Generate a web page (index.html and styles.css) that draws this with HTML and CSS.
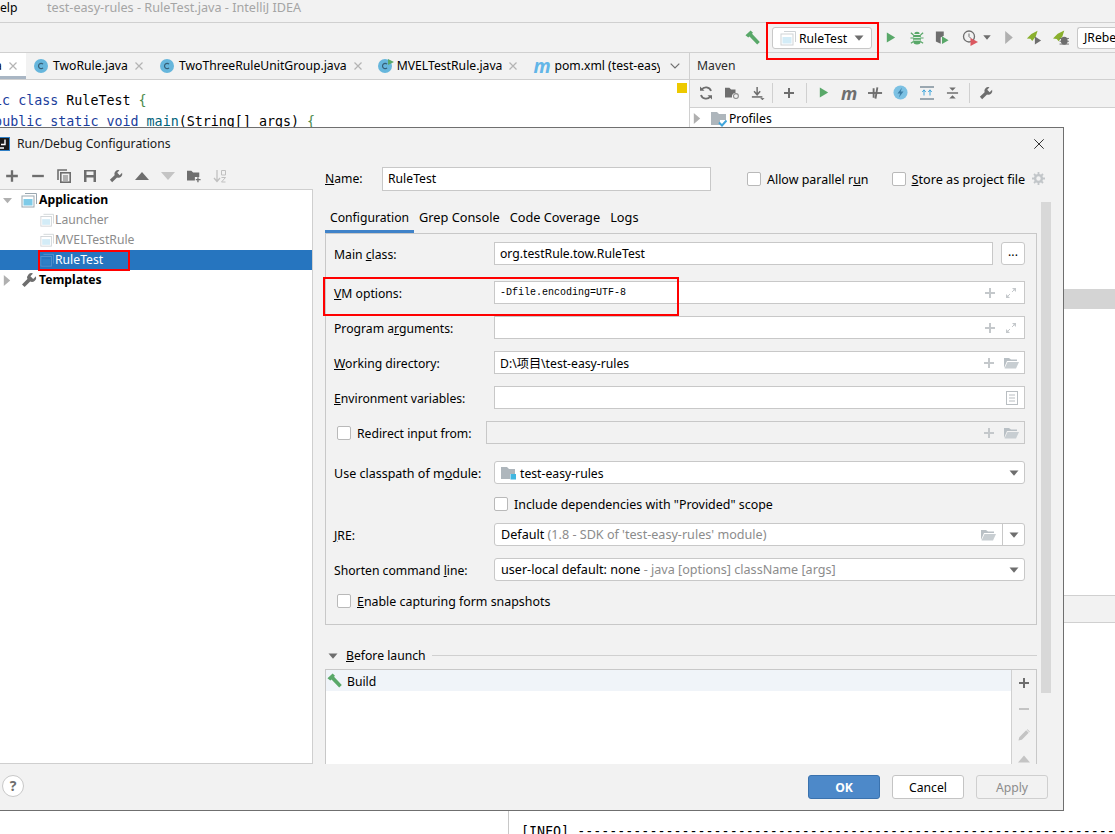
FILE: index.html
```html
<!DOCTYPE html>
<html lang="en">
<head>
<meta charset="utf-8">
<title>Run/Debug Configurations</title>
<link rel="stylesheet" href="styles.css">
</head>
<body>
<svg class="defs" width="0" height="0" aria-hidden="true">
  <defs>
    <symbol id="i-hammer" viewBox="0 0 16 16"><path d="M0.5 5.5 6 0.5 8.5 3 7.5 4 15.8 12.8 13 15.5 4.8 6.8 3.5 8Z" fill="#59a869"/></symbol>
    <symbol id="i-config" viewBox="0 0 16 16"><path d="M4 1.5H15.5V12" fill="none" stroke="#cfd3d6"/><rect x="1" y="4" width="12" height="11" fill="#fff" stroke="#cfd3d6"/><rect x="2.5" y="7" width="9" height="6.5" fill="#d3ecf7"/></symbol>
    <symbol id="i-config-app" viewBox="0 0 16 16"><path d="M4 1.5H15.5V12" fill="none" stroke="#9aa7b0"/><rect x="1" y="4" width="12" height="11" fill="#fff" stroke="#9aa7b0"/><rect x="2.5" y="7" width="9" height="6.5" fill="#7fcbe8"/></symbol>
    <symbol id="i-config-sel" viewBox="0 0 16 16"><path d="M4 1.5H15.5V12" fill="none" stroke="#5a95cf"/><rect x="1" y="4" width="12" height="11" fill="none" stroke="#5a95cf"/><rect x="2.5" y="7" width="9" height="6.5" fill="#2f7fc6"/></symbol>
    <symbol id="i-run" viewBox="0 0 12 14"><path d="M1 1 11 7 1 13Z" fill="#59a869"/></symbol>
    <symbol id="i-bug" viewBox="0 0 16 16"><path d="M5 3.5A3 2.6 0 0 1 11 3.5ZM3.6 4.5H12.4V11A4.4 4.4 0 0 1 3.6 11Z" fill="#59a869"/><path d="M1 2 4 4.5M15 2 12 4.5M0.5 8H3.6M12.4 8H15.5M1 14 4 12M15 14 12 12" stroke="#59a869" stroke-width="1.4"/><path d="M4 7.5H12M4 10.5H12" stroke="#fff"/></symbol>
    <symbol id="i-cover" viewBox="0 0 16 16"><path d="M1 1H10V6L6.5 8V15L1 12.5Z" fill="#6e6e6e"/><path d="M8 6.5 15.5 11 8 15.5Z" fill="#59a869"/></symbol>
    <symbol id="i-profile" viewBox="0 0 16 16"><circle cx="6.5" cy="6.5" r="5.5" fill="none" stroke="#6e6e6e" stroke-width="1.3"/><path d="M6.5 3.5V6.5L8.5 8.5" fill="none" stroke="#6e6e6e"/><path d="M8 8 15.5 12 8 16Z" fill="#db5860"/></symbol>
    <symbol id="i-rebel" viewBox="0 0 18 16"><path d="M1 9 6 4 13 0.5 11 7 7 12 5 9.5Z" fill="#8ab02e"/><path d="M10 7 17 11.5 10 16Z" fill="#6e6e6e"/></symbol>
    <symbol id="i-rebelbug" viewBox="0 0 18 16"><path d="M1 9 6 4 13 0.5 11 7 7 12 5 9.5Z" fill="#8ab02e"/><ellipse cx="13" cy="11.5" rx="3.6" ry="4.2" fill="#6e6e6e"/><path d="M8 9H18M8 12H18M8 15H18" stroke="#6e6e6e"/></symbol>
    <symbol id="i-class" viewBox="0 0 14 14"><circle cx="7" cy="7" r="7" fill="#66b6dc"/><path d="M9 5.2A2.6 2.6 0 1 0 9 8.8" fill="none" stroke="#365f77" stroke-width="1.2"/></symbol>
    <symbol id="i-close" viewBox="0 0 10 10"><path d="M1.5 1.5 8.5 8.5M8.5 1.5 1.5 8.5" stroke="#b4b4b4" stroke-width="1.2"/></symbol>
    <symbol id="i-xlarge" viewBox="0 0 10 10"><path d="M0.3 0.3 9.7 9.7M9.7 0.3 0.3 9.7" stroke="#333" stroke-width="1"/></symbol>
    <symbol id="i-plus" viewBox="0 0 12 12"><path d="M6 1V11M1 6H11" stroke="currentColor" stroke-width="2"/></symbol>
    <symbol id="i-minus" viewBox="0 0 12 12"><path d="M1 6H11" stroke="currentColor" stroke-width="2"/></symbol>
    <symbol id="i-copy" viewBox="0 0 14 14"><path d="M1 11V1H10" fill="none" stroke="#6e6e6e" stroke-width="1.6"/><rect x="3.8" y="3.8" width="9.4" height="9.4" fill="none" stroke="#6e6e6e" stroke-width="1.6"/><path d="M6 7H11M6 9H11M6 11H11" stroke="#6e6e6e"/></symbol>
    <symbol id="i-save" viewBox="0 0 14 14"><path d="M1 1H13V13H1Z" fill="#6e6e6e"/><rect x="3.5" y="2.5" width="7" height="3.5" fill="#f2f2f2"/><rect x="3.5" y="8.5" width="7" height="4.5" fill="#f2f2f2"/></symbol>
    <symbol id="i-wrench" viewBox="0 0 16 16"><path d="M15 4.2 12.2 7 9.4 4.2 12 1.4A4.4 4.4 0 0 0 6.4 7L1 12.4 3.6 15 9.2 9.6A4.4 4.4 0 0 0 15 4.2Z" fill="#6e6e6e"/></symbol>
    <symbol id="i-up" viewBox="0 0 12 8"><path d="M6 0.5 12 7.5H0Z" fill="currentColor"/></symbol>
    <symbol id="i-down" viewBox="0 0 12 8"><path d="M0 0.5H12L6 7.5Z" fill="currentColor"/></symbol>
    <symbol id="i-right" viewBox="0 0 8 12"><path d="M0.5 0 7.5 6 0.5 12Z" fill="#b0b0b0"/></symbol>
    <symbol id="i-folderplus" viewBox="0 0 16 14"><path d="M0 1H5L7 3H14V8H9V12H0Z" fill="#6e6e6e"/><path d="M12.5 8.5V14M10 11.2H15.5" stroke="#6e6e6e" stroke-width="1.5"/></symbol>
    <symbol id="i-sort" viewBox="0 0 14 14"><path d="M4 1V12M1 9 4 12.5 7 9" fill="none" stroke="#c0c0c0" stroke-width="1.3"/><path d="M8.5 1.5H12.5V6H8.5ZM8.5 8.5H12.5L8.5 13H12.5" fill="none" stroke="#c0c0c0"/></symbol>
    <symbol id="i-expand" viewBox="0 0 12 12"><path d="M7 1H11V5ZM1 7V11H5Z" fill="#c4c8cb"/><path d="M9.5 2.5 7 5M2.5 9.5 5 7" stroke="#c4c8cb"/></symbol>
    <symbol id="i-open" viewBox="0 0 15 12"><path d="M0 1H5L7 2.5H13V4H3L0 11Z" fill="#b9c0c5"/><path d="M3.5 5H15L12 11.5H0.5Z" fill="#c8ced2"/></symbol>
    <symbol id="i-doc" viewBox="0 0 12 14"><rect x="0.5" y="0.5" width="11" height="13" fill="#fff" stroke="#b9bec2"/><path d="M3 4H9M3 7H9M3 10H9" stroke="#b9bec2"/></symbol>
    <symbol id="i-module" viewBox="0 0 15 14"><path d="M0 1H6L8 3H14V8H9V13H0Z" fill="#aeb6bc"/><rect x="9.5" y="8" width="5.5" height="5.5" fill="#40b6e0"/></symbol>
    <symbol id="i-gear" viewBox="0 0 14 14"><circle cx="6.5" cy="6.5" r="3.4" fill="none" stroke="#c2c6c9" stroke-width="2.4"/><path d="M6.5 0V3M6.5 10V13M0 6.5H3M10 6.5H13M2 2 4 4M9 9 11 11M11 2 9 4M4 9 2 11" stroke="#c2c6c9" stroke-width="1.8"/></symbol>
    <symbol id="i-sync" viewBox="0 0 14 14"><path d="M12 5A5.2 5.2 0 0 0 2.6 3.8M2 9A5.2 5.2 0 0 0 11.4 10.2" fill="none" stroke="#6e6e6e" stroke-width="1.8"/><path d="M1 0.5 5.5 4.8H1ZM13 13.5 8.5 9.2H13Z" fill="#6e6e6e"/></symbol>
    <symbol id="i-foldersync" viewBox="0 0 16 14"><path d="M0 1H5L7 3H12V7A4 4 0 0 0 8 12H0Z" fill="#6e6e6e"/><circle cx="12.5" cy="10.5" r="2.8" fill="none" stroke="#8b8b8b" stroke-width="1.2"/></symbol>
    <symbol id="i-dl" viewBox="0 0 16 16"><path d="M7 1V9M3.5 6 7 10 10.5 6" fill="none" stroke="#6e6e6e" stroke-width="1.7"/><path d="M1 12.5H13" stroke="#6e6e6e" stroke-width="1.8"/><path d="M10.5 14H15.5L13 16Z" fill="#555"/></symbol>
    <symbol id="i-skip" viewBox="0 0 16 14"><path d="M0 7H15" stroke="#6e6e6e" stroke-width="2"/><path d="M6 2V12M10 1 8 13" stroke="#6e6e6e" stroke-width="2"/></symbol>
    <symbol id="i-bolt" viewBox="0 0 16 16"><circle cx="8" cy="8" r="7.5" fill="#7cc1e3"/><path d="M9.5 2.8 4.8 9H7.6L6.3 13.2 11.2 7H8.3Z" fill="#3c7ea6"/></symbol>
    <symbol id="i-collapse" viewBox="0 0 14 14"><path d="M0 1H14M0 13H14" stroke="#9aa7b0" stroke-width="2"/><path d="M4 9.5V4M2.3 6 4 3.8 5.7 6M10 9.5V4M8.3 6 10 3.8 11.7 6" fill="none" stroke="#40a6dc"/></symbol>
    <symbol id="i-expandall" viewBox="0 0 14 14"><path d="M1 7H13" stroke="#6e6e6e" stroke-width="1.6"/><path d="M3.5 1H10.5L7 4.5ZM3.5 13H10.5L7 9.5Z" fill="#6e6e6e"/></symbol>
    <symbol id="i-profiles" viewBox="0 0 16 16"><path d="M0 1H6L8 3H15V9H9V14H0Z" fill="#aeb6bc"/><path d="M8 11.5 11 14.5 15.5 9.5" fill="none" stroke="#40a6dc" stroke-width="2"/></symbol>
    <symbol id="i-pencil" viewBox="0 0 14 14"><path d="M0.5 13.5 1.5 9.5 9.5 1.5 12.5 4.5 4.5 12.5ZM10.3 0.8 11 0.2 13.8 3 13.2 3.7Z" fill="#c4c4c4"/></symbol>
    <symbol id="i-idea" viewBox="0 0 14 14"><rect width="14" height="14" fill="#1a1a1a"/><rect x="0.5" y="0.5" width="13" height="13" fill="none" stroke="#2f7fc6"/><path d="M9 2.5V7.5H5M3 11H8" stroke="#fff" stroke-width="1.4" fill="none"/></symbol>
  </defs>
</svg>

<div class="ide">
  <header class="titlebar">
    <span class="menu">elp</span>
    <span class="wintitle">test-easy-rules - RuleTest.java - IntelliJ IDEA</span>
  </header>

  <div class="toolbar">
    <svg class="ic-hammer"><use href="#i-hammer"/></svg>
    <div class="runcombo">
      <svg class="ic16"><use href="#i-config"/></svg>
      <span class="runcombo-name">RuleTest</span>
      <svg class="ic-caret gray-dark"><use href="#i-down"/></svg>
    </div>
    <svg class="ic-run"><use href="#i-run"/></svg>
    <svg class="ic-bug"><use href="#i-bug"/></svg>
    <svg class="ic-cover"><use href="#i-cover"/></svg>
    <svg class="ic-profile"><use href="#i-profile"/></svg>
    <svg class="ic-caret-sm gray-dark"><use href="#i-down"/></svg>
    <svg class="ic-run2"><use href="#i-right"/></svg>
    <svg class="ic-rebel"><use href="#i-rebel"/></svg>
    <svg class="ic-rebel2"><use href="#i-rebelbug"/></svg>
    <div class="jrebel">JRebel</div>
  </div>

  <div class="workspace">
    <section class="editor">
      <nav class="tabs">
        <div class="tab tab-active"><span>a</span><svg class="ic-x"><use href="#i-close"/></svg></div>
        <div class="tab tab-two"><svg class="ic14"><use href="#i-class"/></svg><span>TwoRule.java</span><svg class="ic-x"><use href="#i-close"/></svg></div>
        <div class="tab tab-three"><svg class="ic14"><use href="#i-class"/></svg><span>TwoThreeRuleUnitGroup.java</span><svg class="ic-x"><use href="#i-close"/></svg></div>
        <div class="tab tab-mvel"><span class="classrun"><svg class="ic14"><use href="#i-class"/></svg><i class="classrun-flag"></i></span><span>MVELTestRule.java</span><svg class="ic-x"><use href="#i-close"/></svg></div>
        <div class="tab tab-pom"><span class="maven-m">m</span><span class="pom-name">pom.xml (test-easy-rules)</span></div>
        <svg class="chevron" viewBox="0 0 10 6"><path d="M0.7 0.7 5 5 9.3 0.7" fill="none" stroke="#6e6e6e" stroke-width="1.2"/></svg>
      </nav>
      <div class="codearea">
        <pre class="code"><span class="kw">public class</span> RuleTest <span class="brace">{</span>
    <span class="kw">public static void</span> <span class="fn">main</span>(String[] args) <span class="brace">{</span></pre>
        <div class="marker"></div>
      </div>
    </section>

    <aside class="maven">
      <div class="maven-head">Maven</div>
      <div class="maven-tools">
        <svg class="m-ic"><use href="#i-sync"/></svg>
        <svg class="m-ic m-g1"><use href="#i-foldersync"/></svg>
        <svg class="m-ic m-g1"><use href="#i-dl"/></svg>
        <i class="m-sep"></i>
        <svg class="m-ic m-plus"><use href="#i-plus"/></svg>
        <i class="m-sep"></i>
        <svg class="m-ic m-run"><use href="#i-run"/></svg>
        <span class="m-m">m</span>
        <svg class="m-skip"><use href="#i-skip"/></svg>
        <svg class="m-bolt"><use href="#i-bolt"/></svg>
        <svg class="m-ic m-coll"><use href="#i-collapse"/></svg>
        <svg class="m-exp"><use href="#i-expandall"/></svg>
        <i class="m-sep m-sep-end"></i>
        <svg class="m-ic m-wr"><use href="#i-wrench"/></svg>
      </div>
      <div class="maven-tree">
        <div class="profiles"><svg class="ic-tri"><use href="#i-right"/></svg><svg class="ic16"><use href="#i-profiles"/></svg><span>Profiles</span></div>
        <div class="maven-hl"></div>
      </div>
    </aside>
  </div>

  <div class="toolband"></div>

  <div class="console">
    <div class="console-left"></div>
    <pre class="console-log">[INFO] ------------------------------------------------------------------------</pre>
  </div>
</div>

<div class="dialog">
  <div class="dlg-head">
    <svg class="ic14 dlg-logo"><use href="#i-idea"/></svg>
    <span class="dlg-title">Run/Debug Configurations</span>
    <svg class="dlg-close"><use href="#i-xlarge"/></svg>
  </div>

  <div class="dlg-body">
    <div class="left">
      <div class="left-tools">
        <svg class="t-ic dark"><use href="#i-plus"/></svg>
        <svg class="t-ic dark"><use href="#i-minus"/></svg>
        <svg class="t-ic"><use href="#i-copy"/></svg>
        <svg class="t-ic"><use href="#i-save"/></svg>
        <svg class="t-ic"><use href="#i-wrench"/></svg>
        <svg class="t-ic dark"><use href="#i-up"/></svg>
        <svg class="t-ic pale"><use href="#i-down"/></svg>
        <svg class="t-ic"><use href="#i-folderplus"/></svg>
        <svg class="t-ic"><use href="#i-sort"/></svg>
      </div>
      <div class="tree">
        <div class="node node-root"><svg class="tw-down"><use href="#i-down"/></svg><svg class="ic16"><use href="#i-config-app"/></svg><b>Application</b></div>
        <div class="node node-leaf node-muted"><svg class="ic14"><use href="#i-config"/></svg><span>Launcher</span></div>
        <div class="node node-leaf node-muted"><svg class="ic14"><use href="#i-config"/></svg><span>MVELTestRule</span></div>
        <div class="node node-leaf node-sel"><svg class="ic14"><use href="#i-config-sel"/></svg><span>RuleTest</span></div>
        <div class="node node-root"><svg class="tw-right"><use href="#i-right"/></svg><svg class="ic16"><use href="#i-wrench"/></svg><b>Templates</b></div>
      </div>
    </div>

    <div class="right">
      <div class="config">
        <div class="name-row">
          <label class="name-label"><u>N</u>ame:</label>
          <div class="field name-field">RuleTest</div>
          <span class="check check-allow"></span><span class="check-text">Allow parallel r<u>u</u>n</span>
          <span class="check check-store"></span><span class="check-text check-text-store"><u>S</u>tore as project file</span>
          <svg class="ic-gear"><use href="#i-gear"/></svg>
        </div>

        <div class="cfg-tabs">
          <span class="cfg-tab cfg-tab-on">Configuration</span>
          <span class="cfg-tab">Grep Console</span>
          <span class="cfg-tab">Code Coverage</span>
          <span class="cfg-tab cfg-tab-logs">Logs</span>
        </div>

        <div class="panel">
          <div class="row row-first">
            <label class="lbl">Main <u>c</u>lass:</label>
            <div class="field grow">org.testRule.tow.RuleTest</div>
            <div class="dots">...</div>
          </div>
          <div class="row row-vm">
            <label class="lbl"><u>V</u>M options:</label>
            <div class="field grow"><span class="vm-text">-Dfile.encoding=UTF-8</span><span class="fld-icons"><svg class="fi"><use href="#i-plus"/></svg><svg class="fi"><use href="#i-expand"/></svg></span></div>
          </div>
          <div class="row">
            <label class="lbl">Program a<u>r</u>guments:</label>
            <div class="field grow"><span class="fld-icons"><svg class="fi"><use href="#i-plus"/></svg><svg class="fi"><use href="#i-expand"/></svg></span></div>
          </div>
          <div class="row">
            <label class="lbl"><u>W</u>orking directory:</label>
            <div class="field grow field-low"><span>D:\项目\test-easy-rules</span><span class="fld-icons"><svg class="fi"><use href="#i-plus"/></svg><svg class="fi-open"><use href="#i-open"/></svg></span></div>
          </div>
          <div class="row">
            <label class="lbl"><u>E</u>nvironment variables:</label>
            <div class="field grow"><span class="fld-icons"><svg class="fi-doc"><use href="#i-doc"/></svg></span></div>
          </div>
          <div class="row row-redirect">
            <span class="check"></span><label class="lbl-redirect">Redirect input from:</label>
            <div class="field grow field-off"><span class="fld-icons"><svg class="fi"><use href="#i-plus"/></svg><svg class="fi-open"><use href="#i-open"/></svg></span></div>
          </div>
          <div class="row row-class">
            <label class="lbl lbl-wide">Use classpath of m<u>o</u>dule:</label>
            <div class="field grow combo field-low"><svg class="ic-mod"><use href="#i-module"/></svg><span>test-easy-rules</span><svg class="combo-caret gray-dark"><use href="#i-down"/></svg></div>
          </div>
          <div class="row row-include">
            <span class="check"></span><span class="check-text">Include dependencies with "Provided" scope</span>
          </div>
          <div class="row">
            <label class="lbl"><u>J</u>RE:</label>
            <div class="field grow combo combo-wide"><span>Default <span class="dim">(1.8 - SDK of 'test-easy-rules' module)</span></span><span class="fld-icons jre-icons"><svg class="fi-open"><use href="#i-open"/></svg></span><span class="jre-split"><svg class="combo-caret-s gray-dark"><use href="#i-down"/></svg></span></div>
          </div>
          <div class="row">
            <label class="lbl">Shorten command <u>l</u>ine:</label>
            <div class="field grow combo combo-wide"><span>user-local default: none <span class="dim">- java [options] className [args]</span></span><svg class="combo-caret gray-dark"><use href="#i-down"/></svg></div>
          </div>
          <div class="row row-snap">
            <span class="check"></span><label class="lbl-redirect lbl-snap"><u>E</u>nable capturing form snapshots</label>
          </div>
        </div>

        <div class="before-head">
          <svg class="before-tri gray-dark"><use href="#i-down"/></svg>
          <span class="before-text"><u>B</u>efore launch</span>
          <i class="before-line"></i>
        </div>
        <div class="before-box">
          <div class="before-list">
            <div class="before-item"><svg class="ic-build"><use href="#i-hammer"/></svg><span>Build</span></div>
          </div>
          <div class="before-tools">
            <svg class="bt dark"><use href="#i-plus"/></svg>
            <svg class="bt pale3"><use href="#i-minus"/></svg>
            <svg class="bt"><use href="#i-pencil"/></svg>
            <svg class="bt-up pale3"><use href="#i-up"/></svg>
          </div>
        </div>
      </div>
      <div class="scrollbar"></div>
    </div>
  </div>

  <div class="dlg-foot">
    <div class="help">?</div>
    <div class="btn btn-ok">OK</div>
    <div class="btn btn-cancel">Cancel</div>
    <div class="btn btn-apply">Apply</div>
  </div>
</div>

<div class="mark mark-run"></div>
<div class="mark mark-rule"></div>
<div class="mark mark-vm"></div>
</body>
</html>
```

FILE: styles.css
```css
* { box-sizing: border-box; }
html, body { margin: 0; padding: 0; }
body {
  position: relative;
  width: 1115px;
  height: 834px;
  overflow: hidden;
  background: #fff;
  color: #000;
  font: 12.2px/17px "Noto Sans", "Noto Sans CJK SC", sans-serif;
  white-space: nowrap;
}
svg { display: block; flex: none; }
.defs { position: absolute; }
.ic14 { width: 14px; height: 14px; }
.ic16 { width: 16px; height: 16px; }
.gray-dark { color: #6e6e6e; }

.ide { display: flex; flex-direction: column; height: 834px; }

/* title bar */
.titlebar {
  flex: none;
  display: flex;
  align-items: center;
  height: 23px;
  padding-bottom: 8px;
  background: #f2f2f2;
  border-bottom: 1px solid #d0d0d0;
}
.menu { width: 47px; }
.wintitle { color: #a5a5a5; font-size: 12.65px; }

/* main toolbar */
.toolbar {
  flex: none;
  display: flex;
  align-items: center;
  height: 30px;
  padding: 0 0 0 745px;
  background: #f2f2f2;
  border-bottom: 1px solid #d0d0d0;
}
.ic-hammer { width: 15px; height: 15px; margin-right: 12px; }
.runcombo {
  flex: none;
  display: flex;
  align-items: center;
  width: 100px;
  height: 22px;
  margin-top: 1px;
  padding-left: 7px;
  background: #fff;
  border: 1px solid #c8c8c8;
  border-radius: 3px;
}
.runcombo-name { margin-left: 3px; }
.ic-caret { width: 10px; height: 6px; margin-left: 7px; }
.ic-run { width: 10px; height: 13px; margin-left: 14px; }
.ic-bug { width: 14px; height: 14px; margin-left: 14px; }
.ic-cover { width: 14px; height: 15px; margin-left: 11px; }
.ic-profile { width: 17px; height: 16px; margin-left: 13px; }
.ic-caret-sm { width: 8px; height: 5px; margin-left: 4px; }
.ic-run2 { width: 10px; height: 13px; margin-left: 13px; }
.ic-rebel { width: 16px; height: 15px; margin-left: 12px; }
.ic-rebel2 { width: 17px; height: 15px; margin-left: 10px; }
.jrebel {
  flex: none;
  width: 60px;
  height: 22px;
  margin-left: 8px;
  padding: 1px 0 0 6px;
  background: #fff;
  border: 1px solid #c8c8c8;
  border-right: 0;
  border-radius: 3px 0 0 3px;
}

/* workspace */
.workspace { flex: none; display: flex; height: 542px; }
.editor { flex: none; width: 689px; display: flex; flex-direction: column; }
.tabs {
  flex: none;
  display: flex;
  align-items: center;
  height: 27px;
  background: #f2f2f2;
  border-bottom: 1px solid #d0d0d0;
}
.tab { flex: none; display: flex; align-items: center; height: 100%; }
.tab-active {
  width: 26px;
  background: #fff;
  border-bottom: 3px solid #a9b6c4;
  padding-top: 2px;
}
.tab-two { margin-left: 8px; }
.tab-three { margin-left: 16px; }
.tab-mvel { margin-left: 15px; }
.tab-pom { margin-left: 15px; }
.tab span { margin: -1px 0 0 5px; }
.tab-active span { margin-left: -5px; }
.tab .classrun { margin: 0; position: relative; display: block; }
.classrun-flag {
  position: absolute;
  top: 0;
  right: -2px;
  width: 0;
  height: 0;
  border-left: 6px solid #59a869;
  border-top: 3px solid transparent;
  border-bottom: 3px solid transparent;
}
.ic-x { width: 10px; height: 10px; margin-left: 6px; }
.maven-m {
  width: 16px;
  color: #62b6e8;
  font: italic bold 19px/20px "Noto Sans", sans-serif;
}
.tab .maven-m { margin-left: 0; }
.tab .pom-name { width: 106px; margin-left: 5px; overflow: hidden; }
.chevron { width: 10px; height: 6px; margin-left: 10px; }
.codearea { flex: 1; position: relative; overflow: hidden; background: #fff; }
.code {
  margin: 10px 0 0 -38px;
  font: 13.33px/21px "DejaVu Sans Mono", monospace;
  color: #000;
}
.kw { color: #1a3d9c; }
.fn { color: #00627a; }
.brace { color: #4a8a4a; }
.marker {
  position: absolute;
  top: 3px;
  right: 2px;
  width: 10px;
  height: 10px;
  background: #edc900;
}

/* maven panel */
.maven {
  flex: 1;
  display: flex;
  flex-direction: column;
  border-left: 1px solid #d0d0d0;
}
.maven-head {
  flex: none;
  height: 27px;
  padding: 4px 0 0 7px;
  background: #f2f2f2;
  border-bottom: 1px solid #d0d0d0;
  color: #2b2b2b;
}
.maven-tools {
  flex: none;
  display: flex;
  align-items: center;
  height: 28px;
  padding: 0 0 2px 9px;
  background: #f2f2f2;
  border-bottom: 1px solid #d0d0d0;
}
.m-ic { width: 14px; height: 14px; }
.m-g1 { margin-left: 12px; }
.m-sep { flex: none; width: 1px; height: 20px; margin: 0 10px 0 7px; background: #d0d0d0; }
.m-plus { width: 12px; height: 12px; color: #6e6e6e; margin-right: 4px; }
.m-run { width: 10px; height: 13px; margin-left: 2px; }
.m-m {
  width: 16px;
  margin-left: 12px;
  color: #6e6e6e;
  font: italic bold 18px/18px "Noto Sans", sans-serif;
}
.m-skip { width: 15px; height: 14px; margin-left: 11px; }
.m-bolt { width: 15px; height: 15px; margin-left: 10px; }
.m-coll { margin-left: 12px; }
.m-exp { width: 13px; height: 14px; margin-left: 12px; }
.m-sep-end { margin-left: 10px; margin-right: 9px; }
.maven-tree { flex: 1; background: #fff; }
.profiles { display: flex; align-items: center; height: 20px; padding: 1px 0 0 3px; }
.ic-tri { width: 8px; height: 11px; margin-right: 10px; }
.profiles span { margin-left: 2px; }
.maven-hl { height: 20px; margin-top: 161px; background: #d4d4d4; }

.toolband {
  flex: none;
  height: 28px;
  background: #f2f2f2;
  border-top: 1px solid #d0d0d0;
  border-bottom: 1px solid #d0d0d0;
}
.console { flex: 1; display: flex; overflow: hidden; }
.console-left { flex: none; width: 509px; border-right: 1px solid #c8c8c8; }
.console-log {
  margin: 200px 0 0 12px;
  font: 13.33px/18px "DejaVu Sans Mono", monospace;
}

/* dialog window */
.dialog {
  position: absolute;
  left: -10px;
  top: 127px;
  width: 1074px;
  height: 684px;
  display: flex;
  flex-direction: column;
  background: #f2f2f2;
  border: 1px solid #6f6f6f;
}
.dlg-head { flex: none; display: flex; align-items: center; height: 34px; padding: 0 19px 3px 5px; }
.dlg-logo { margin-right: 7px; }
.dlg-title { flex: 1; color: #1a1a1a; }
.dlg-close { width: 10px; height: 10px; }

.dlg-body { flex: none; display: flex; height: 602px; overflow: hidden; }
.left { flex: none; width: 322px; display: flex; flex-direction: column; }
.left-tools { flex: none; display: flex; align-items: center; gap: 12px; height: 27px; padding-left: 14px; }
.t-ic { width: 14px; height: 14px; }
.dark { color: #6e6e6e; }
.pale { color: #c4c4c4; }
.tree {
  flex: 1;
  background: #fff;
  border-top: 1px solid #cfcfcf;
  border-right: 1px solid #cfcfcf;
  border-bottom: 1px solid #cfcfcf;
}
.node { display: flex; align-items: center; height: 20px; }
.node b, .node span { margin-top: -1px; }
.node-root { padding-left: 12px; }
.node-root b { margin-left: 2px; }
.tw-down { width: 9px; height: 7px; margin-right: 9px; color: #b0b0b0; }
.tw-right { width: 8px; height: 11px; margin-right: 10px; }
.node-leaf { padding-left: 49px; }
.node-leaf span { margin-left: 1px; }
.node-muted { color: #8c8c8c; }
.node-sel { background: #2675bf; color: #fff; }

.right { flex: 1; display: flex; padding-left: 12px; min-width: 0; }
.config { flex: none; width: 712px; }
.scrollbar { flex: none; width: 10px; height: 491px; margin: 40px 0 0 4px; background: #d8d8d8; }

.name-row { display: flex; align-items: center; height: 24px; margin-top: 5px; }
.name-label { flex: none; width: 57px; margin-top: -1px; }
.field {
  display: flex;
  align-items: center;
  height: 23px;
  padding-left: 5px;
  background: #fff;
  border: 1px solid #c8c8c8;
}
.field-low { padding-top: 1px; }
.name-field { flex: none; width: 329px; height: 24px; padding-bottom: 1px; }
.grow { flex: 1; min-width: 0; }
.check {
  flex: none;
  display: block;
  width: 14px;
  height: 14px;
  background: #fff;
  border: 1px solid #b9b9b9;
  border-radius: 2px;
}
.check-allow { margin-left: 36px; }
.check-store { margin-left: 23px; }
.check-text { flex: none; margin-left: 6px; font-size: 12.45px; }
.check-text-store { font-size: 12.65px; }
.ic-gear { width: 14px; height: 14px; margin-left: 7px; }

.cfg-tabs { display: flex; height: 30px; margin-top: 12px; }
.cfg-tab { padding: 6px 5px 0; height: 30px; font-size: 12.75px; }
.cfg-tab-on { border-bottom: 3px solid #4083c9; font-size: 12.2px; }
.panel {
  height: 392px;
  padding: 8px 11px 0 8px;
  border: 1px solid #c8c8c8;
}
.row { display: flex; align-items: center; margin-top: 12px; height: 23px; }
.row-first { margin-top: 0; }
.row-vm { margin-top: 16px; }
.lbl { flex: none; width: 160px; padding-top: 2px; }
.lbl-wide { font-size: 12.5px; }
.dots {
  flex: none;
  width: 24px;
  height: 23px;
  margin-left: 8px;
  text-align: center;
  background: #fff;
  border: 1px solid #c8c8c8;
  border-radius: 3px;
  line-height: 18px;
}
.vm-text { font: 10px/14px "Liberation Mono", monospace; padding-top: 1px; }
.fld-icons { display: flex; align-items: center; gap: 9px; margin-left: auto; padding-right: 7px; }
.fi { width: 12px; height: 12px; color: #c4c8cb; }
.fi-open { width: 15px; height: 12px; margin-right: -2px; }
.fi-doc { width: 12px; height: 14px; margin-right: -1px; }
.row-redirect .check { margin-left: 3px; }
.lbl-redirect { flex: none; margin-left: 6px; padding-top: 1px; }
.lbl-snap { font-size: 12.4px; }
.row-redirect .lbl-redirect { width: 129px; }
.field-off { background: #f2f2f2; }
.row-class { margin-top: 17px; }
.combo { border-radius: 3px; padding-left: 6px; }
.combo-wide { font-size: 12.6px; }
.ic-mod { width: 15px; height: 14px; margin-right: 4px; }
.combo-caret { width: 10px; height: 6px; margin-left: auto; margin-right: 5px; }
.row-include { height: 14px; margin-top: 13px; padding-left: 160px; }
.dim { color: #8c8c8c; }
.jre-icons { padding-right: 8px; }
.jre-split {
  flex: none;
  display: flex;
  align-items: center;
  justify-content: center;
  width: 22px;
  height: 21px;
  border-left: 1px solid #c8c8c8;
}
.combo-caret-s { width: 10px; height: 6px; }
.row-snap { height: 14px; margin-top: 13px; }
.row-snap .check { margin-left: 3px; }

.before-head { display: flex; align-items: center; height: 17px; margin-top: 22px; }
.before-tri { width: 10px; height: 6px; margin-left: 3px; }
.before-text { margin-left: 8px; }
.before-line { flex: 1; height: 1px; margin-left: 6px; background: #d0d0d0; }
.before-box {
  display: flex;
  height: 130px;
  margin-top: 5px;
  background: #fff;
  border: 1px solid #c8c8c8;
}
.before-list { flex: 1; }
.before-item { display: flex; align-items: center; height: 21px; padding-top: 1px; background: #f0f4f9; }
.ic-build { width: 15px; height: 15px; margin-left: 1px; margin-bottom: 2px; }
.before-item span { margin-left: 5px; }
.before-tools {
  flex: none;
  width: 25px;
  display: flex;
  flex-direction: column;
  align-items: center;
  gap: 14px;
  padding-top: 7px;
  background: #f2f2f2;
  border-left: 1px solid #d0d0d0;
}
.bt { width: 12px; height: 12px; }
.pale3 { color: #c4c4c4; }
.bt-up { width: 12px; height: 8px; }

.dlg-foot { flex: 1; display: flex; align-items: flex-start; padding: 11px 15px 0 11px; }
.help {
  flex: none;
  width: 22px;
  height: 22px;
  margin-right: auto;
  background: #fff;
  border: 1px solid #c8c8c8;
  border-radius: 50%;
  text-align: center;
  color: #6e6e6e;
  font-weight: 700;
  font-size: 14px;
  line-height: 20px;
}
.btn {
  flex: none;
  width: 72px;
  height: 24px;
  margin-left: 12px;
  text-align: center;
  line-height: 23px;
  background: #fff;
  border: 1px solid #c4c4c4;
  border-radius: 3px;
}
.btn-ok {
  background: #4d89c9;
  border-color: #3a72ae;
  color: #fff;
  font-weight: 700;
}
.btn-apply { background: #f2f2f2; color: #8c8c8c; border-color: #cfcfcf; }

/* red annotation boxes */
.mark { position: absolute; border: 2px solid #f00; }
.mark-run { left: 766px; top: 22px; width: 113px; height: 38px; }
.mark-rule { left: 38px; top: 250px; width: 92px; height: 21px; }
.mark-vm { left: 323px; top: 277px; width: 356px; height: 39px; }
```
